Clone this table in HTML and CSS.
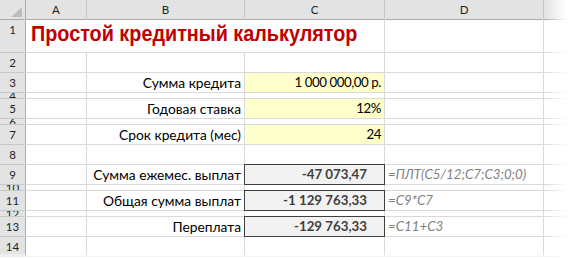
FILE: index.html
```html
<!DOCTYPE html>
<html lang="ru">
<head>
<meta charset="utf-8">
<title>Простой кредитный калькулятор</title>
<link rel="stylesheet" href="styles.css">
</head>
<body>
<div class="sheet">
  <div class="grid">
    <!-- column headers -->
    <div class="corner"><span class="tri"></span></div>
    <div class="ch">A</div><div class="ch">B</div><div class="ch">C</div><div class="ch">D</div><div class="ch"></div>

    <!-- 1 -->
    <div class="rh">1</div>
    <div class="c title"><span class="title-text">Простой кредитный калькулятор</span></div>
    <div class="c"></div><div class="c"></div>

    <!-- 2 -->
    <div class="rh">2</div>
    <div class="c"></div><div class="c"></div><div class="c"></div><div class="c"></div><div class="c"></div>

    <!-- 3 -->
    <div class="rh">3</div>
    <div class="c"></div>
    <div class="c lbl">Сумма кредита</div>
    <div class="c inp">1 000 000,00 р.</div>
    <div class="c"></div><div class="c"></div>

    <!-- 4 -->
    <div class="rh thin">4</div>
    <div class="c"></div><div class="c"></div><div class="c"></div><div class="c"></div><div class="c"></div>

    <!-- 5 -->
    <div class="rh">5</div>
    <div class="c"></div>
    <div class="c lbl">Годовая ставка</div>
    <div class="c inp">12%</div>
    <div class="c"></div><div class="c"></div>

    <!-- 6 -->
    <div class="rh thin">6</div>
    <div class="c"></div><div class="c"></div><div class="c"></div><div class="c"></div><div class="c"></div>

    <!-- 7 -->
    <div class="rh">7</div>
    <div class="c"></div>
    <div class="c lbl">Срок кредита (мес)</div>
    <div class="c inp">24</div>
    <div class="c"></div><div class="c"></div>

    <!-- 8 -->
    <div class="rh">8</div>
    <div class="c"></div><div class="c"></div><div class="c"></div><div class="c"></div><div class="c"></div>

    <!-- 9 -->
    <div class="rh">9</div>
    <div class="c"></div>
    <div class="c lbl">Сумма ежемес. выплат</div>
    <div class="c out">-47 073,47</div>
    <div class="c fx">=ПЛТ(C5/12;C7;C3;0;0)</div>
    <div class="c"></div>

    <!-- 10 -->
    <div class="rh thin">10</div>
    <div class="c"></div><div class="c"></div><div class="c"></div><div class="c"></div><div class="c"></div>

    <!-- 11 -->
    <div class="rh">11</div>
    <div class="c"></div>
    <div class="c lbl">Общая сумма выплат</div>
    <div class="c out">-1 129 763,33</div>
    <div class="c fx">=C9*C7</div>
    <div class="c"></div>

    <!-- 12 -->
    <div class="rh thin">12</div>
    <div class="c"></div><div class="c"></div><div class="c"></div><div class="c"></div><div class="c"></div>

    <!-- 13 -->
    <div class="rh">13</div>
    <div class="c"></div>
    <div class="c lbl">Переплата</div>
    <div class="c out">-129 763,33</div>
    <div class="c fx">=C11+C3</div>
    <div class="c"></div>

    <!-- 14 -->
    <div class="rh">14</div>
    <div class="c"></div><div class="c"></div><div class="c"></div><div class="c"></div><div class="c"></div>

    <!-- 15 -->
    <div class="rh">15</div>
    <div class="c"></div><div class="c"></div><div class="c"></div><div class="c"></div><div class="c"></div>
  </div>
  <div class="fade-r"></div>
  <div class="fade-b"></div>
</div>
</body>
</html>
```

FILE: styles.css
```css
body {
  margin: 0;
  background: #fff;
}

.sheet {
  position: relative;
  width: 570px;
  height: 259px;
  overflow: hidden;
  font-family: Lato, "Liberation Sans", sans-serif;
}

/* worksheet grid: gaps act as gridlines */
.grid {
  display: grid;
  grid-template-columns: 25px 60px 157px 139px 158px 1fr;
  grid-template-rows: 19px 32px 19px 19px 5px 19px 5px 19px 19px 19px 5px 19px 5px 19px 19px 19px;
  gap: 1px;
  background: #d9d9d9;
}

/* headers */
.corner,
.ch,
.rh {
  background: #e3e3e3;
  color: #1f1f1f;
  font-size: 11.5px;
  line-height: 19px;
  text-align: center;
}

.corner {
  display: flex;
  justify-content: flex-end;
  align-items: flex-end;
  padding: 0 3px 2px 0;
  box-shadow: 1px 0 0 #ababab, 0 1px 0 #ababab;
}

.tri {
  width: 0;
  height: 0;
  border-left: 11px solid transparent;
  border-bottom: 10px solid #bdbdbd;
}

.ch {
  box-shadow: 1px 0 0 #c4c4c4, 0 1px 0 #ababab;
}

.rh {
  overflow: hidden;
  box-shadow: 1px 0 0 #ababab, 0 1px 0 #c9c9c9;
}

.rh.thin {
  line-height: 5px;
}

/* cells */
.c {
  background: #fff;
  color: #000;
  font-size: 13.3px;
  line-height: 19px;
  white-space: nowrap;
}

.title {
  grid-column: 2 / 5;
  padding-left: 5px;
  color: #c00000;
  font-family: "Liberation Sans", sans-serif;
  font-weight: bold;
  font-size: 22px;
  line-height: 28px;
}

/* narrow headline face */
.title-text {
  display: inline-block;
  transform: scaleX(0.9);
  transform-origin: 0 50%;
}

.lbl {
  font-size: 13.8px;
  text-align: right;
  padding-right: 3px;
}

.inp {
  background: #ffffcc;
  text-align: right;
  padding-right: 3px;
  letter-spacing: -0.45px;
}

.out {
  background: #f2f2f2;
  outline: 1px solid #3f3f3f;
  color: #3f3f3f;
  font-weight: bold;
  text-align: right;
  padding-right: 17px;
}

.fx {
  color: #7f7f7f;
  font-style: italic;
  padding-left: 3px;
}

/* soft edge of the sheet */
.fade-r {
  position: absolute;
  top: 0;
  right: 0;
  width: 26px;
  height: 100%;
  background: linear-gradient(to right, rgba(255, 255, 255, 0), #fff 88%);
}

.fade-b {
  position: absolute;
  left: 0;
  bottom: 0;
  width: 100%;
  height: 6px;
  background: linear-gradient(to bottom, rgba(255, 255, 255, 0), #fff 85%);
}
```
